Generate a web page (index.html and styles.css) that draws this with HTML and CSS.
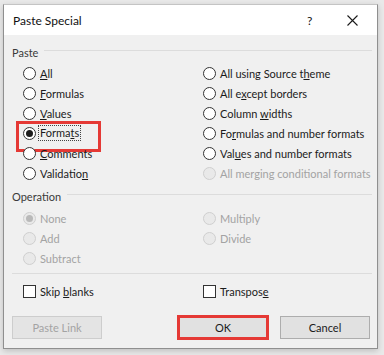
FILE: index.html
```html
<!DOCTYPE html>
<html lang="en">
  <head>
    <meta charset="UTF-8" />
    <meta name="viewport" content="width=device-width, initial-scale=1.0" />
    <title>Paste Special</title>
    <link rel="stylesheet" href="styles.css">
  </head>

  <body>
    <div class="dialog">
      <div class="titlebar">
        <span class="title">Paste Special</span>
        <span class="help">?</span>
        <span class="close">
          <svg width="11" height="11" viewBox="0 0 11 11">
            <path d="M0.5 0.5 L10.5 10.5 M10.5 0.5 L0.5 10.5" stroke="#1a1a1a" stroke-width="1.1" fill="none" />
          </svg>
        </span>
      </div>

      <div class="content">
        <div class="group-label">Paste</div>
        <div class="options">
          <label class="opt"><span class="radio"></span><span><u>A</u>ll</span></label>
          <label class="opt"><span class="radio"></span><span>All using Source t<u>h</u>eme</span></label>
          <label class="opt"><span class="radio"></span><span><u>F</u>ormulas</span></label>
          <label class="opt"><span class="radio"></span><span>All e<u>x</u>cept borders</span></label>
          <label class="opt"><span class="radio"></span><span><u>V</u>alues</span></label>
          <label class="opt"><span class="radio"></span><span>Column <u>w</u>idths</span></label>
          <label class="opt highlight"><span class="radio checked"></span><span class="focus">Forma<u>t</u>s</span></label>
          <label class="opt"><span class="radio"></span><span>Fo<u>r</u>mulas and number formats</span></label>
          <label class="opt"><span class="radio"></span><span><u>C</u>omments</span></label>
          <label class="opt"><span class="radio"></span><span>Val<u>u</u>es and number formats</span></label>
          <label class="opt"><span class="radio"></span><span>Validatio<u>n</u></span></label>
          <label class="opt disabled"><span class="radio"></span><span>All merging conditional formats</span></label>
        </div>

        <div class="group-label op-label">Operation</div>
        <div class="options op-options">
          <label class="opt disabled"><span class="radio checked"></span><span>None</span></label>
          <label class="opt disabled"><span class="radio"></span><span>Multiply</span></label>
          <label class="opt disabled"><span class="radio"></span><span>Add</span></label>
          <label class="opt disabled"><span class="radio"></span><span>Divide</span></label>
          <label class="opt disabled"><span class="radio"></span><span>Subtract</span></label>
        </div>

        <div class="separator"></div>

        <div class="options checks">
          <label class="opt"><span class="checkbox"></span><span>Skip <u>b</u>lanks</span></label>
          <label class="opt"><span class="checkbox"></span><span>Transpos<u>e</u></span></label>
        </div>

        <div class="buttons">
          <button class="btn" disabled>Paste Link</button>
          <button class="btn btn-ok">OK</button>
          <button class="btn">Cancel</button>
        </div>
      </div>
    </div>
  </body>
</html>
```

FILE: styles.css
```css
* {
  margin: 0;
  padding: 0;
  box-sizing: border-box;
}

body {
  height: 100vh;
  width: 100vw;
  padding: 4px 0 0 3px;
  background: #e9e9e9;
  font-family: "Lato", "Noto Sans", sans-serif;
  font-size: 11px;
  color: #1b1b1b;
  overflow: hidden;
}

.dialog {
  width: 375px;
  background: #f0f0f0;
  border: 1px solid #8f8f8f;
  border-top-color: #c4c4c4;
  box-shadow: 0 2px 6px rgba(0, 0, 0, 0.18);
}

/* title bar */
.titlebar {
  height: 30px;
  background: #fff;
  display: flex;
  align-items: center;
  padding-left: 9px;
  padding-top: 1px;
}

.titlebar .title {
  font-size: 12px;
  color: #111;
  flex: 1;
}

.titlebar .help {
  font-size: 12px;
  width: 40px;
  color: #111;
}

.titlebar .close {
  width: 30px;
  display: flex;
  align-items: center;
}

/* body */
.content {
  padding: 9px 7px 9px 8px;
}

.group-label {
  height: 16px;
  display: flex;
  align-items: center;
  gap: 6px;
  color: #3a3a3a;
}

.group-label::after {
  content: "";
  flex: 1;
  height: 1px;
  margin-top: -3px;
  margin-right: -2px;
  background: #dcdcdc;
}

.op-label {
  margin-top: 5px;
}

.options {
  display: grid;
  grid-template-columns: 180px 1fr;
  grid-auto-rows: 20px;
  padding-left: 11px;
  margin-top: 3px;
}

.op-options {
  margin-top: 4px;
}

.opt {
  display: flex;
  align-items: center;
  gap: 4px;
  position: relative;
  white-space: nowrap;
}

.opt u {
  text-underline-offset: 1px;
}

.radio {
  width: 13px;
  height: 13px;
  border-radius: 50%;
  border: 1px solid #333;
  background: #fff;
  display: flex;
  align-items: center;
  justify-content: center;
}

.radio.checked::after {
  content: "";
  width: 7px;
  height: 7px;
  border-radius: 50%;
  background: #1b1b1b;
}

.disabled {
  color: #a3a3a3;
}

.disabled .radio {
  border-color: #cfcfcf;
  background: #e9e9e9;
}

.disabled .radio.checked::after {
  background: #b9b9b9;
}

.checkbox {
  width: 13px;
  height: 13px;
  border: 1px solid #333;
  background: #fff;
}

/* red callout drawn over the Formats option */
.highlight::after {
  content: "";
  position: absolute;
  left: -7px;
  top: -2px;
  width: 79px;
  height: 25px;
  border: 3px solid #e53935;
}

.focus {
  border: 1px dotted #444;
  padding: 0 1px;
  margin-left: -2px;
  line-height: 14px;
}

.separator {
  height: 1px;
  margin: 5px -2px 0 0;
  background: #dcdcdc;
}

.checks {
  margin-top: 7px;
}

.buttons {
  display: flex;
  gap: 12px;
  margin-top: 15px;
}

.btn {
  width: 90px;
  height: 23px;
  font-family: inherit;
  font-size: 11px;
  color: #1b1b1b;
  background: #e1e1e1;
  border: 1px solid #adadad;
}

.btn:disabled {
  color: #a3a3a3;
  background: #e4e4e4;
  border-color: #cdcdcd;
}

.btn-ok {
  margin-left: auto;
  border-color: #0078d7;
  outline: 3px solid #e53935;
  outline-offset: -2px;
}
```
